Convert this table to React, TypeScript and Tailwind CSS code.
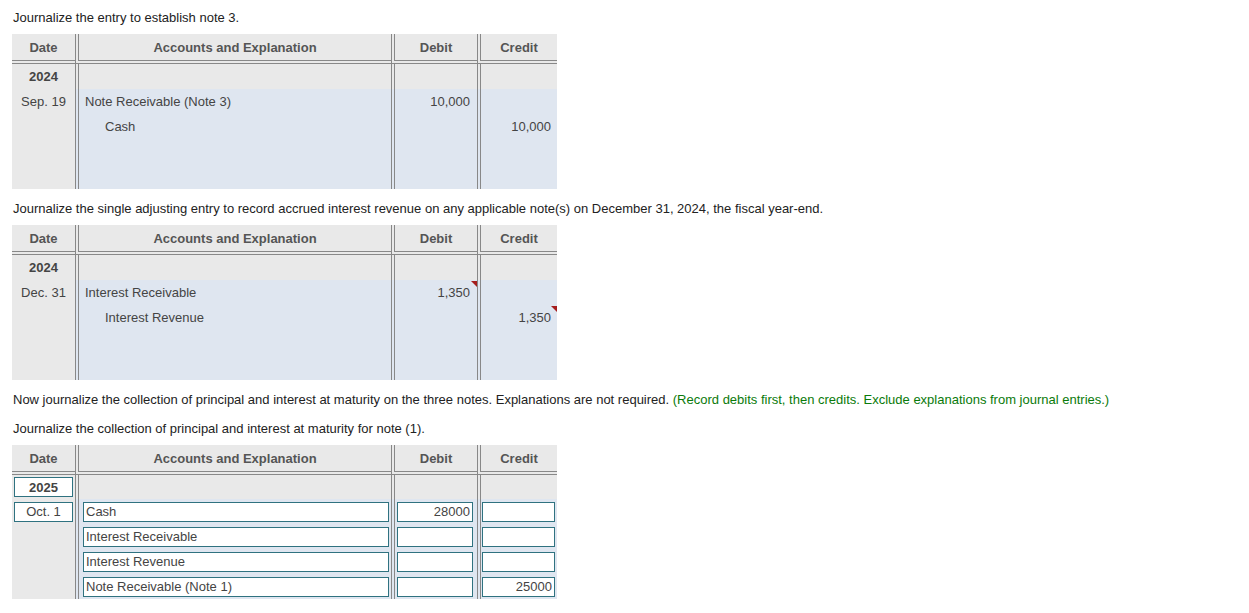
import React from "react";

type Line = {
  date?: string;
  year?: boolean;
  account?: string;
  indent?: boolean;
  debit?: string;
  credit?: string;
  flagDebit?: boolean;
  flagCredit?: boolean;
};

const GRAY = "bg-[#e9e9e9]";
const BLUE = "bg-[#dfe6f0]";

function Flag() {
  return (
    <span className="absolute top-[1px] right-0 h-0 w-0 border-l-[6px] border-l-transparent border-t-[6px] border-t-[#a51d1d]" />
  );
}

function Header() {
  const cell =
    "flex h-[30px] items-center justify-center border-b-4 border-double border-[#888] font-bold text-[#555]";
  return (
    <>
      <div className={`${cell} ${GRAY}`}>Date</div>
      <div className={`${cell} ${GRAY} border-l-4`}>Accounts and Explanation</div>
      <div className={`${cell} ${GRAY} border-l-4`}>Debit</div>
      <div className={`${cell} ${GRAY} border-l-4`}>Credit</div>
    </>
  );
}

function StaticTable({ lines, blank }: { lines: Line[]; blank: number }) {
  const rows = [...lines];
  for (let i = 0; i < blank; i++) rows.push({});
  return (
    <div className="grid w-[545px] grid-cols-[63px_316px_86px_80px] text-[#444]">
      <Header />
      {rows.map((l, i) => {
        const bg = i === 0 ? GRAY : BLUE;
        return (
          <React.Fragment key={i}>
            <div
              className={`flex h-[25px] items-center justify-center ${GRAY} ${
                l.year ? "font-bold" : ""
              }`}
            >
              {l.date}
            </div>
            <div
              className={`flex h-[25px] items-center border-l-4 border-double border-[#888] ${bg} ${
                l.indent ? "pl-[26px]" : "pl-[6px]"
              }`}
            >
              {l.account}
            </div>
            <div
              className={`relative flex h-[25px] items-center justify-end border-l-4 border-double border-[#888] pr-[7px] ${bg}`}
            >
              {l.debit}
              {l.flagDebit && <Flag />}
            </div>
            <div
              className={`relative flex h-[25px] items-center justify-end border-l-4 border-double border-[#888] pr-[6px] ${bg}`}
            >
              {l.credit}
              {l.flagCredit && <Flag />}
            </div>
          </React.Fragment>
        );
      })}
    </div>
  );
}

function Box({
  value,
  align = "left",
  className = "",
}: {
  value?: string;
  align?: "left" | "right" | "center";
  className?: string;
}) {
  const a =
    align === "right"
      ? "justify-end pr-[2px]"
      : align === "center"
      ? "justify-center"
      : "justify-start pl-[2px]";
  return (
    <div
      className={`flex h-[20px] items-center border border-[#2f7280] bg-white text-[#444] ${a} ${className}`}
    >
      {value}
    </div>
  );
}

function InputTable() {
  const rows = [
    { date: "Oct. 1", account: "Cash", debit: "28000", credit: "" },
    { date: "", account: "Interest Receivable", debit: "", credit: "" },
    { date: "", account: "Interest Revenue", debit: "", credit: "" },
    { date: "", account: "Note Receivable (Note 1)", debit: "", credit: "25000" },
  ];
  const side = "border-l-4 border-double border-[#888]";
  return (
    <div className="grid w-[545px] grid-cols-[63px_316px_86px_80px] text-[#444]">
      <Header />
      <div className={`flex h-[24px] items-center px-[2px] ${GRAY}`}>
        <Box value="2025" align="center" className="w-full font-bold" />
      </div>
      <div className={`h-[24px] ${side} ${GRAY}`} />
      <div className={`h-[24px] ${side} ${GRAY}`} />
      <div className={`h-[24px] ${side} ${GRAY}`} />
      {rows.map((r, i) => (
        <React.Fragment key={i}>
          <div className={`flex h-[25px] items-center px-[2px] ${GRAY}`}>
            {r.date && <Box value={r.date} align="center" className="w-full" />}
          </div>
          <div className={`flex h-[25px] items-center pl-[4px] pr-[2px] ${side} ${BLUE}`}>
            <Box value={r.account} className="w-full" />
          </div>
          <div className={`flex h-[25px] items-center pl-[2px] pr-[4px] ${side} ${BLUE}`}>
            <Box value={r.debit} align="right" className="w-full" />
          </div>
          <div className={`flex h-[25px] items-center pl-[1px] pr-[2px] ${side} ${BLUE}`}>
            <Box value={r.credit} align="right" className="w-full" />
          </div>
        </React.Fragment>
      ))}
    </div>
  );
}

export default function App() {
  return (
    <div className="min-h-screen bg-white pl-3 pt-[10px] font-['Liberation_Sans',Arial,sans-serif] text-[13px] leading-[15px] text-[#222]">
      <p className="pl-px">Journalize the entry to establish note 3.</p>
      <div className="mt-[9px]">
        <StaticTable
          blank={2}
          lines={[
            { date: "2024", year: true },
            { date: "Sep. 19", account: "Note Receivable (Note 3)", debit: "10,000" },
            { account: "Cash", indent: true, credit: "10,000" },
          ]}
        />
      </div>

      <p className="mt-[12px] pl-px">
        Journalize the single adjusting entry to record accrued interest revenue on any
        applicable note(s) on December 31, 2024, the fiscal year-end.
      </p>
      <div className="mt-[9px]">
        <StaticTable
          blank={2}
          lines={[
            { date: "2024", year: true },
            { date: "Dec. 31", account: "Interest Receivable", debit: "1,350", flagDebit: true },
            { account: "Interest Revenue", indent: true, credit: "1,350", flagCredit: true },
          ]}
        />
      </div>

      <p className="mt-[12px] pl-px">
        Now journalize the collection of principal and interest at maturity on the three
        notes. Explanations are not required.{" "}
        <span className="text-[#0a7a0a]">
          (Record debits first, then credits. Exclude explanations from journal entries.)
        </span>
      </p>
      <p className="mt-[14px] pl-px">
        Journalize the collection of principal and interest at maturity for note (1).
      </p>
      <div className="mt-[9px]">
        <InputTable />
      </div>
    </div>
  );
}
